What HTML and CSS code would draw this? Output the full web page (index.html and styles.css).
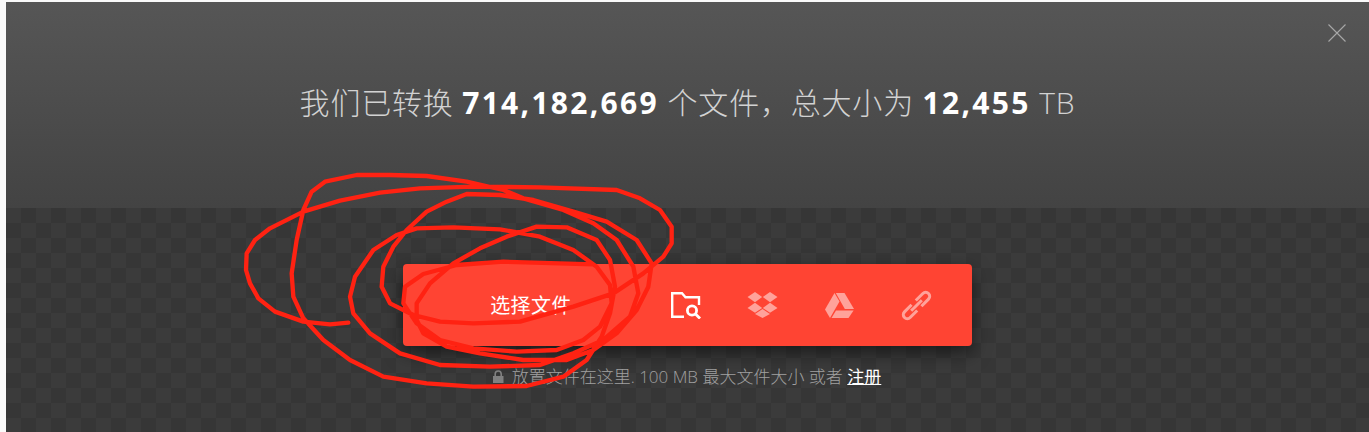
FILE: index.html
```html
<!DOCTYPE html>
<html lang="zh">
<head>
<meta charset="utf-8">
<title>文件转换</title>
<link rel="stylesheet" href="styles.css">
</head>
<body>
<main class="stage">
  <header class="hero">
    <h1 class="stats">我们已转换 <b>714,182,669</b> 个文件，总大小为 <b>12,455</b> TB</h1>
    <svg class="close" viewBox="0 0 18 18" aria-hidden="true"><path d="M0.5 0.5 17.5 17.5M17.5 0.5 0.5 17.5"/></svg>
  </header>
  <section class="drop">
    <div class="picker">
      <div class="picker-label">选择文件</div>
      <div class="picker-icon">
        <svg class="icon-folder" width="30" height="27" viewBox="0 0 30 27"><path d="M1.2 13V1.2H11L14.5 5.2H28V13M1.2 12V24.8H13"/><circle class="lens" cx="21" cy="18.5" r="4.6"/><path class="lens" d="M24.5 22 29 26.5"/></svg>
      </div>
      <div class="picker-icon">
        <svg class="icon-faded" width="31" height="26" viewBox="0 0 31 26"><polygon points="8,0 0.5,5 8,10.2 15.2,5"/><polygon points="23,0 15.8,5 23,10.2 30.5,5"/><polygon points="8,10.8 0.5,16 8,20.8 15.2,16"/><polygon points="23,10.8 15.8,16 23,20.8 30.5,16"/><polygon points="15.5,17 8,22 15.5,26 23,22"/></svg>
      </div>
      <div class="picker-icon">
        <svg class="icon-faded" width="29" height="25" viewBox="0 0 29 25"><polygon points="9.5,0 0,16.5 5,25 14.5,8.5"/><polygon points="10.8,0 19.5,0 29,16 19.8,16"/><polygon points="6.5,25 23.5,25 28.6,17.5 11,17.5"/></svg>
      </div>
      <div class="picker-icon">
        <svg class="icon-link" width="31" height="31" viewBox="0 0 31 31"><g transform="rotate(-45 15.5 15.5)"><path d="M12.5 11.5H2.5a4 4 0 0 0 0 8H12.5"/><path d="M18.5 11.5H28.5a4 4 0 0 1 0 8H18.5"/><path d="M8 15.5H23"/></g></svg>
      </div>
    </div>
    <p class="note">
      <svg class="lock" width="12" height="14" viewBox="0 0 12 14"><path d="M1 6H11.5V13H1Z"/><path class="shackle" d="M3.2 6V4A3 3 0 0 1 9.2 4V6"/></svg>
      <span class="note-text">放置文件在这里. 100 MB 最大文件大小 或者 <a class="signup" href="#">注册</a></span>
    </p>
  </section>
</main>
<svg class="scribble" viewBox="0 0 1320 660" aria-hidden="true">
  <path d="M325 458 270 463 190 455 105 425 55 385 30 340 18 300 20 250 45 210 90 175 190 125 300 92 420 68 540 55 700 50 900 52 1130 60 1200 85 1260 120 1295 170 1295 220 1270 260 1210 310 1120 370 1000 410 840 455 700 460 600 455 520 435 450 400 425 350 430 290 460 230 500 180 560 125 620 95 680 72 780 75 880 90 1000 125 1100 155 1190 210 1235 280 1225 350 1190 420 1130 490 1060 540 980 570 850 570 720 550 620 530 550 490 530 450 530 400 570 340 640 280 720 235 800 200 890 170 980 172 1070 210 1110 270 1125 350 1110 430 1085 500 1040 570 970 620 860 648 700 650 560 640 430 620 330 570 250 510 190 445 160 380 155 310 170 210 190 120 215 65 255 35 350 15 450 15 560 18 680 35 790 60 850 85 970 120 1060 160 1130 210 1180 290 1195 370 1170 440 1090 510 1000 550 900 585 750 590 600 585 480 550 390 490 340 430 330 380 345 320 400 240 470 195 530 175 640 172 780 178 900 200 1000 240 1070 290 1110 345 1115 400 1080 470 1030 510 950 540 830 545 700 535 600 510 530 460 490 400 495 350 550 312 650 285 790 275 1060 283"/>
</svg>
</body>
</html>
```
FILE: styles.css
```css
* { box-sizing: border-box; }
html, body { height: 100%; }
body {
  margin: 0;
  padding: 2px 0 0 6px;
  overflow: hidden;
  background: #fafafa;
  font-family: "Open Sans", "Noto Sans CJK SC", sans-serif;
}
.stage { height: 430px; display: flex; flex-direction: column; }
.hero {
  position: relative;
  height: 206px;
  padding-top: 78px;
  background: linear-gradient(#565656, #434343);
  text-align: center;
}
.stats {
  margin: 0;
  font-size: 30px;
  line-height: 46px;
  font-weight: 300;
  letter-spacing: .8px;
  color: #d2d2d2;
}
.stats b { font-weight: 700; letter-spacing: 2.3px; color: #fff; }
.close {
  position: absolute;
  right: 23px;
  top: 22px;
  width: 18px;
  height: 18px;
  fill: none;
  stroke: #a8a8a8;
  stroke-width: 1.1;
}
.drop {
  flex: 1;
  padding-top: 56px;
  display: flex;
  flex-direction: column;
  align-items: center;
  background: repeating-conic-gradient(#363636 0 25%, #3b3b3b 0 50%) 0 0 / 30px 30px;
}
.picker {
  width: 569px;
  height: 82px;
  padding-right: 17px;
  display: flex;
  align-items: center;
  background: #ff4433;
  border-radius: 4px;
  box-shadow: 0 7px 18px rgba(0, 0, 0, .55);
}
.picker-label {
  flex: 1;
  padding: 0 0 2px 12px;
  text-align: center;
  font-size: 20px;
  letter-spacing: .4px;
  color: #fff;
}
.picker-icon { width: 77px; display: flex; justify-content: center; }
.icon-folder { fill: none; stroke: #fff; stroke-width: 2.4; }
.lens { stroke-width: 2.8; }
.icon-faded { fill: #ffa29a; }
.icon-link { fill: none; stroke: #ffa29a; stroke-width: 3; }
.note {
  margin: 19px 0 0 -2px;
  display: flex;
  align-items: center;
  gap: 8px;
  font-size: 17px;
  line-height: 24px;
  font-weight: 300;
  color: #a0a0a0;
}
.lock { fill: #808080; }
.shackle { fill: none; stroke: #808080; stroke-width: 1.6; }
.signup { color: #fff; font-weight: 400; text-decoration: underline; }
.scribble {
  position: absolute;
  left: 240px;
  top: 170px;
  width: 440px;
  height: 220px;
  overflow: visible;
  fill: none;
  stroke: #ff2212;
  stroke-width: 13;
  stroke-linejoin: round;
  stroke-linecap: round;
}
```
